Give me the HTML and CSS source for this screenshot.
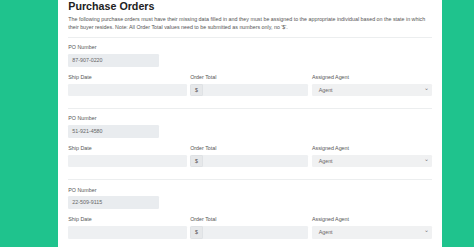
FILE: index.html
```html
<!DOCTYPE html>
<html>
<head lang="en">
    <meta charset="UTF-8">
    <title>Purchase Orders</title>
    <link rel="stylesheet" href="styles.css">
</head>
<body>
    <div class="page">
        <div class="panel">
            <h2 class="title">Purchase Orders</h2>
            <p class="intro">The following purchase orders must have their missing data filled in and they must be assigned to the appropriate individual based on the state in which their buyer resides. Note: All Order Total values need to be submitted as numbers only, no '$'.</p>

            <div class="order">
                <label class="label">PO Number</label>
                <div class="po-input">87-907-0220</div>
                <div class="fields">
                    <div class="field">
                        <label class="label">Ship Date</label>
                        <div class="input"></div>
                    </div>
                    <div class="field">
                        <label class="label">Order Total</label>
                        <div class="group">
                            <span class="addon">$</span>
                            <div class="input"></div>
                        </div>
                    </div>
                    <div class="field">
                        <label class="label">Assigned Agent</label>
                        <div class="select">Agent<span class="caret">&#8964;</span></div>
                    </div>
                </div>
            </div>

            <div class="order">
                <label class="label">PO Number</label>
                <div class="po-input">51-921-4580</div>
                <div class="fields">
                    <div class="field">
                        <label class="label">Ship Date</label>
                        <div class="input"></div>
                    </div>
                    <div class="field">
                        <label class="label">Order Total</label>
                        <div class="group">
                            <span class="addon">$</span>
                            <div class="input"></div>
                        </div>
                    </div>
                    <div class="field">
                        <label class="label">Assigned Agent</label>
                        <div class="select">Agent<span class="caret">&#8964;</span></div>
                    </div>
                </div>
            </div>

            <div class="order">
                <label class="label">PO Number</label>
                <div class="po-input">22-509-9115</div>
                <div class="fields">
                    <div class="field">
                        <label class="label">Ship Date</label>
                        <div class="input"></div>
                    </div>
                    <div class="field">
                        <label class="label">Order Total</label>
                        <div class="group">
                            <span class="addon">$</span>
                            <div class="input"></div>
                        </div>
                    </div>
                    <div class="field">
                        <label class="label">Assigned Agent</label>
                        <div class="select">Agent<span class="caret">&#8964;</span></div>
                    </div>
                </div>
            </div>
        </div>
    </div>
</body>
</html>
```

FILE: styles.css
```css
* {
    margin: 0;
    padding: 0;
    box-sizing: border-box;
}
html, body {
    height: 100%;
}
body {
    background-color: #1fc38d;
    font-family: "Liberation Sans", Arial, sans-serif;
    color: #444;
    overflow: hidden;
}
.page {
    display: flex;
    height: 100%;
}
.panel {
    margin-left: 58px;
    width: 383.5px;
    min-height: 100%;
    background-color: #fff;
    padding: 0 10px 0 10.3px;
}
.title {
    font-size: 10.7px;
    line-height: 12.8px;
    font-weight: bold;
    color: #222;
    margin-bottom: 2.7px;
}
.intro {
    font-size: 5.33px;
    line-height: 8px;
    color: #555;
    padding-bottom: 5.5px;
}
.order {
    border-top: 1px solid #eceeef;
    padding-top: 5.3px;
    padding-bottom: 11.8px;
}
.label {
    display: block;
    font-size: 5.33px;
    line-height: 8px;
    color: #555;
    margin-bottom: 2.7px;
}
.po-input {
    width: 91px;
    height: 12.7px;
    background-color: #e9ecef;
    border-radius: 1.3px;
    font-size: 5.33px;
    line-height: 12.7px;
    padding-left: 4px;
    color: #666;
}
.fields {
    display: grid;
    grid-template-columns: 118.4px 118.3px 1fr;
    column-gap: 3.5px;
    margin-top: 6.3px;
}
.input {
    height: 12.7px;
    background-color: #eef0f2;
    border-radius: 1.3px;
    flex: 1;
}
.group {
    display: flex;
    height: 12.7px;
}
.group .input {
    border-radius: 0 1.3px 1.3px 0;
}
.addon {
    width: 12.6px;
    background-color: #e6e8ea;
    border: 1px solid #dfe2e5;
    border-radius: 1.3px 0 0 1.3px;
    font-size: 5.33px;
    line-height: 10.7px;
    text-align: center;
    color: #555;
}
.select {
    position: relative;
    height: 12.7px;
    background-color: #f0f1f2;
    border-radius: 1.3px;
    font-size: 5.33px;
    line-height: 12.7px;
    padding-left: 6.7px;
    color: #666;
}
.caret {
    position: absolute;
    right: 2.5px;
    top: -1.5px;
    font-size: 6px;
    color: #777;
}
```
